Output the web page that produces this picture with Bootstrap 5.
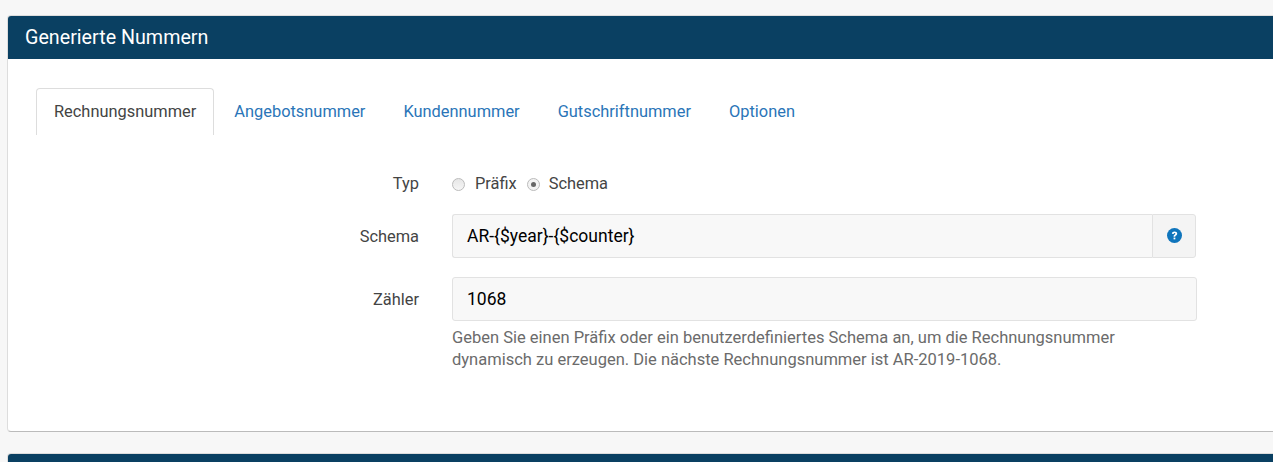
<!DOCTYPE html>
<html lang="de">
<head>
<meta charset="utf-8">
<title>Generierte Nummern</title>
<link rel="stylesheet" href="https://cdn.jsdelivr.net/npm/bootstrap@5.3.0/dist/css/bootstrap.min.css">
<style>
html,body{height:462px;overflow:hidden}
body{background:#f7f7f7;font-family:Roboto,sans-serif;color:#444;font-size:16.4px;padding:15px 0 0 7px}
.pnl{width:1300px;background:#fff;border:1px solid #ddd;border-bottom:1px solid #bbb;border-radius:4px;margin-bottom:21px}
.pnl-head{background:#0a4062;color:#fff;font-size:19.7px;line-height:21px;padding:11px 17px;height:43px;border-radius:3px 3px 0 0}
.pnl-body{height:372px;padding:29px 28px 0}
.tabs{border:0;gap:2px;height:47px;margin-bottom:0}
.tabs .nav-link{color:#2a75b8;padding:12px 17px 10px;font-size:16.4px;line-height:22px;border:1px solid transparent;border-bottom:0;margin:0;height:47px}
.tabs .nav-link.active{color:#444;background:#fff;border-color:#ddd;border-radius:4px 4px 0 0}
.frm{margin-top:38px;width:1161px}
.frm-label{width:416px;flex:none;text-align:right;padding-right:33px;color:#444;line-height:46px}
.radio-dot{width:13px;height:13px;border-radius:50%;border:1px solid #bbb;background:linear-gradient(#e6e6e6,#f6f6f6);flex:none;margin-right:10px;display:inline-flex;align-items:center;justify-content:center}
.radio-dot.on::after{content:"";width:5px;height:5px;border-radius:50%;background:#666}
.radio-dot.on{background:#f3f3f3;margin-right:9px}
.typ{height:22px;line-height:22px;margin-bottom:19px}
.typ .frm-label{line-height:22px}
.radio-txt{margin-right:10px}
.fld{background:#f8f8f8;border:1px solid #e2e2e2;border-radius:3px;height:44px;color:#000;font-size:17.5px;line-height:42px;padding:0 14px;width:745px}
.grp{width:744px;display:flex;margin-bottom:19px}
.grp .fld{flex:1;width:auto;border-right:0;border-radius:3px 0 0 3px}
.grp-add{width:44px;height:44px;flex:none;background:#f4f4f4;border:1px solid #e2e2e2;border-radius:0 3px 3px 0;display:flex;align-items:center;justify-content:center;padding-bottom:2px}
.hint{color:#6b6b6b;font-size:16.5px;line-height:22px;margin-top:6px;width:700px}
.row-line{display:flex;align-items:flex-start}
</style>
</head>
<body>
<div class="pnl">
  <div class="pnl-head">Generierte Nummern</div>
  <div class="pnl-body">
    <ul class="nav nav-tabs tabs">
      <li class="nav-item"><a class="nav-link active" href="#">Rechnungsnummer</a></li>
      <li class="nav-item"><a class="nav-link" href="#">Angebotsnummer</a></li>
      <li class="nav-item"><a class="nav-link" href="#">Kundennummer</a></li>
      <li class="nav-item"><a class="nav-link" href="#">Gutschriftnummer</a></li>
      <li class="nav-item"><a class="nav-link" href="#">Optionen</a></li>
    </ul>
    <div class="frm">
      <div class="row-line typ">
        <div class="frm-label">Typ</div>
        <div class="d-flex align-items-center"><span class="radio-dot"></span><span class="radio-txt">Präfix</span><span class="radio-dot on"></span><span>Schema</span></div>
      </div>
      <div class="row-line">
        <div class="frm-label">Schema</div>
        <div class="grp">
          <div class="fld">AR-{$year}-{$counter}</div>
          <div class="grp-add">
            <svg width="15" height="15" viewBox="0 0 16 16"><circle cx="8" cy="8" r="8" fill="#0f75bc"/><path d="M5.2 6.2C5.3 4.6 6.5 3.7 8.1 3.7c1.6 0 2.8.9 2.8 2.3 0 1-.6 1.5-1.3 2-.6.4-.8.7-.8 1.3H7c0-1.1.3-1.6 1-2.1.5-.4.9-.6.9-1.1 0-.4-.3-.7-.8-.7-.6 0-.9.4-1 .9z" fill="#fff"/><rect x="7" y="10.2" width="1.9" height="1.9" fill="#fff"/></svg>
          </div>
        </div>
      </div>
      <div class="row-line">
        <div class="frm-label">Zähler</div>
        <div>
          <div class="fld">1068</div>
          <div class="hint">Geben Sie einen Präfix oder ein benutzerdefiniertes Schema an, um die Rechnungsnummer dynamisch zu erzeugen. Die nächste Rechnungsnummer ist AR-2019-1068.</div>
        </div>
      </div>
    </div>
  </div>
</div>
<div class="pnl"><div class="pnl-head">&nbsp;</div></div>
<script src="https://cdn.jsdelivr.net/npm/bootstrap@5.3.0/dist/js/bootstrap.bundle.min.js"></script>
</body>
</html>
